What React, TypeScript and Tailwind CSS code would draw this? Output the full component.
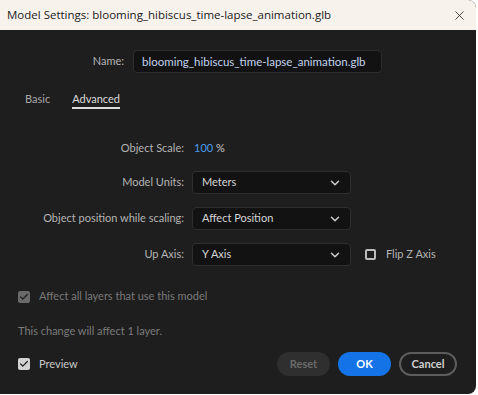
import React from 'react';
import { ChevronDown, Check, X } from 'lucide-react';

const Select = ({ value }: { value: string }) => (
    <div className="flex items-center justify-between w-[159px] h-[23px] pl-[9px] pr-[8px] bg-[#121212] border border-[#2e2e2e] rounded-[4px] text-[#d6d6d6]">
        <span>{value}</span>
        <ChevronDown size={14} strokeWidth={2.6} className="text-[#c8c8c8]" />
    </div>
);

const Row = ({ label, children }: { label: string; children: React.ReactNode }) => (
    <div className="flex items-center h-[23px]">
        <div className="w-[184px] text-right text-[#b4b4b4]">{label}</div>
        <div className="ml-[8px] flex items-center">{children}</div>
    </div>
);

export default function App() {
    return (
        <div className="w-[478px] h-[395px] bg-white" style={{ fontFamily: 'Lato, "Liberation Sans", sans-serif' }}>
            <div className="w-[476px] h-[394px] rounded-r-[8px] overflow-hidden bg-[#1e1e1e] flex flex-col text-[11px] whitespace-nowrap">
                <div className="h-[30px] bg-[#f8f2ed] flex items-center justify-between pl-[7px] pr-[9px] text-[#1a1a1a] text-[11.5px]" style={{ fontFamily: '"Open Sans", sans-serif' }}>
                    <span>Model Settings: blooming_hibiscus_time-lapse_animation.glb</span>
                    <X size={15} strokeWidth={1.3} className="text-[#222]" />
                </div>

                <div className="flex items-center mt-[20px] h-[23px]">
                    <div className="w-[124px] text-right text-[#b4b4b4]">Name:</div>
                    <div className="ml-[9px] w-[249px] h-[23px] flex items-center px-[8px] bg-[#121212] border border-[#2e2e2e] rounded-[4px] text-[#c2d2ec] text-[11.5px]">
                        blooming_hibiscus_time-lapse_animation.glb
                    </div>
                </div>

                <div className="flex items-end mt-[19px] pl-[25px] gap-[22px] h-[17px]">
                    <span className="text-[#a9a9a9] pb-[2px]">Basic</span>
                    <span className="text-[#dcdcdc] border-b-2 border-[#dcdcdc] pb-[0px]">Advanced</span>
                </div>

                <div className="flex items-center mt-[31px] h-[16px]">
                    <div className="w-[184px] text-right text-[#b4b4b4]">Object Scale:</div>
                    <div className="ml-[10px]">
                        <span className="text-[#4b9cf0]">100</span>
                        <span className="text-[#c8c8c8]"> %</span>
                    </div>
                </div>

                <div className="flex flex-col gap-[13px] mt-[15px]">
                    <Row label="Model Units:">
                        <Select value="Meters" />
                    </Row>
                    <Row label="Object position while scaling:">
                        <Select value="Affect Position" />
                    </Row>
                    <Row label="Up Axis:">
                        <Select value="Y Axis" />
                        <div className="ml-[14px] w-[11px] h-[11px] border-2 border-[#bdbdbd] rounded-[2px]" />
                        <span className="ml-[10px] text-[#b4b4b4]">Flip Z Axis</span>
                    </Row>
                </div>

                <div className="flex items-center mt-[24px] pl-[18px] h-[13px]">
                    <div className="w-[12px] h-[12px] rounded-[2px] bg-[#6a6a6a] flex items-center justify-center">
                        <Check size={10} strokeWidth={3} className="text-[#1e1e1e]" />
                    </div>
                    <span className="ml-[9px] text-[#7a7a7a]">Affect all layers that use this model</span>
                </div>

                <div className="mt-[20px] pl-[18px] text-[#7c7c7c] h-[16px] leading-[16px]">This change will affect 1 layer.</div>

                <div className="flex items-center justify-between mt-[13px] pl-[18px] pr-[19px] h-[24px]">
                    <div className="flex items-center">
                        <div className="w-[12px] h-[12px] rounded-[2px] bg-[#d2d2d2] flex items-center justify-center">
                            <Check size={10} strokeWidth={3} className="text-[#1e1e1e]" />
                        </div>
                        <span className="ml-[9px] text-[#c8c8c8]">Preview</span>
                    </div>
                    <div className="flex items-center gap-[8px] font-bold">
                        <div className="w-[53px] h-[24px] rounded-full bg-[#2f2f2f] text-[#6a6a6a] flex items-center justify-center">Reset</div>
                        <div className="w-[53px] h-[24px] rounded-full bg-[#1473e6] text-white flex items-center justify-center">OK</div>
                        <div className="w-[58px] h-[24px] rounded-full border-2 border-[#5c5c5c] text-[#d0d0d0] flex items-center justify-center">Cancel</div>
                    </div>
                </div>
            </div>
        </div>
    );
}
